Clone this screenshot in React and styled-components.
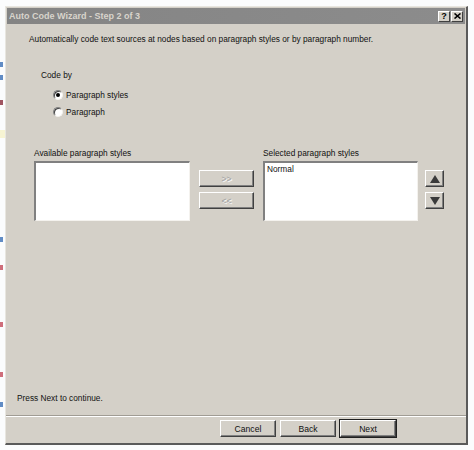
import React, { useState } from 'react';
import styled, { createGlobalStyle } from 'styled-components';

const GlobalStyle = createGlobalStyle`
  html, body {
    margin: 0;
    padding: 0;
    background: #ffffff;
  }
  * {
    box-sizing: border-box;
  }
`;

const App = () => {
  const [codeBy, setCodeBy] = useState('styles');
  return (
    <Desktop>
      <GlobalStyle />
      <BehindStrip>
        <Mark color='#3b6fb6' top={62} />
        <Mark color='#3b6fb6' top={75} />
        <Mark color='#8a2a3a' top={100} />
        <Mark color='#f6f1c8' top={130} wide />
        <Mark color='#3b6fb6' top={237} />
        <Mark color='#c44a5a' top={265} />
        <Mark color='#c44a5a' top={322} />
        <Mark color='#c44a5a' top={372} />
        <Mark color='#3b6fb6' top={402} />
      </BehindStrip>
      <Window>
        <TitleBar>
          <Title>Auto Code Wizard - Step 2 of 3</Title>
          <Caption>
            <CaptionButton>?</CaptionButton>
            <CaptionButton>
              <svg width='7' height='6' viewBox='0 0 7 6'>
                <path d='M0.5 0.5 L6.5 5.5 M6.5 0.5 L0.5 5.5' stroke='#000' strokeWidth='1.6' />
              </svg>
            </CaptionButton>
          </Caption>
        </TitleBar>
        <Body>
          <Intro>Automatically code text sources at nodes based on paragraph styles or by paragraph number.</Intro>
          <Group>
            <GroupLabel>Code by</GroupLabel>
            <Radio onClick={() => setCodeBy('styles')}>
              <RadioDot checked={codeBy === 'styles'} />
              Paragraph styles
            </Radio>
            <Radio onClick={() => setCodeBy('number')}>
              <RadioDot checked={codeBy === 'number'} />
              Paragraph
            </Radio>
          </Group>
          <Lists>
            <ListLabel col={1}>Available paragraph styles</ListLabel>
            <ListLabel col={3}>Selected paragraph styles</ListLabel>
            <ListBox col={1} />
            <MoveButtons>
              <PushButton disabled>&gt;&gt;</PushButton>
              <PushButton disabled>&lt;&lt;</PushButton>
            </MoveButtons>
            <ListBox col={3}>
              <ListItem>Normal</ListItem>
            </ListBox>
            <ArrowButtons>
              <ArrowButton>
                <svg width='10' height='8' viewBox='0 0 10 8'>
                  <path d='M5 0 L10 8 L0 8 Z' fill='#3a3a3a' />
                </svg>
              </ArrowButton>
              <ArrowButton>
                <svg width='10' height='8' viewBox='0 0 10 8'>
                  <path d='M0 0 L10 0 L5 8 Z' fill='#3a3a3a' />
                </svg>
              </ArrowButton>
            </ArrowButtons>
          </Lists>
          <Spacer />
          <Footer>Press Next to continue.</Footer>
        </Body>
        <Separator />
        <ButtonRow>
          <PushButton wide>Cancel</PushButton>
          <PushButton wide>Back</PushButton>
          <PushButton wide isDefault>Next</PushButton>
        </ButtonRow>
      </Window>
    </Desktop>
  );
};

export default App;

const Desktop = styled.div`
  position: relative;
  width: 474px;
  height: 450px;
  overflow: hidden;
  background: #fbfcfd;
  padding: 6px 0 0 5px;
  font-family: 'Liberation Sans', Arial, sans-serif;
  font-size: 8.3px;
  color: #111;
`;

const BehindStrip = styled.div`
  position: absolute;
  left: 0;
  top: 0;
  width: 5px;
  height: 450px;
`;

const Mark = styled.div`
  position: absolute;
  left: 0;
  top: ${(p) => p.top}px;
  width: ${(p) => (p.wide ? 5 : 3)}px;
  height: ${(p) => (p.wide ? 8 : 5)}px;
  background: ${(p) => p.color};
  opacity: 0.8;
`;

const Window = styled.div`
  width: 463px;
  height: 439px;
  background: #d4d0c8;
  border-top: 1px solid #e8e6e0;
  border-left: 1px solid #e8e6e0;
  border-right: 2px solid #5a5a5a;
  border-bottom: 2px solid #5a5a5a;
  display: flex;
  flex-direction: column;
`;

const TitleBar = styled.div`
  height: 16px;
  margin: 1px 1px 0 1px;
  background: linear-gradient(to right, #848484, #8c8c8c);
  display: flex;
  align-items: center;
  justify-content: space-between;
  padding: 0 2px 0 2px;
`;

const Title = styled.div`
  color: #d8d4cc;
  font-family: 'Liberation Sans', Arial, sans-serif;
  font-weight: bold;
  font-size: 9px;
`;

const Caption = styled.div`
  display: flex;
  gap: 1px;
`;

const CaptionButton = styled.div`
  width: 12px;
  height: 11px;
  background: #d4d0c8;
  border-top: 1px solid #fff;
  border-left: 1px solid #fff;
  border-right: 1px solid #404040;
  border-bottom: 1px solid #404040;
  display: flex;
  align-items: center;
  justify-content: center;
  font-weight: bold;
  font-size: 9px;
  line-height: 1;
  color: #000;
`;

const Body = styled.div`
  flex: 1;
  display: flex;
  flex-direction: column;
  padding: 0 0 0 10px;
`;

const Intro = styled.div`
  margin: 10px 0 0 13px;
  line-height: 11px;
`;

const Group = styled.div`
  margin: 25px 0 0 25px;
  display: flex;
  flex-direction: column;
`;

const GroupLabel = styled.div`
  line-height: 11px;
  margin-bottom: 8px;
`;

const Radio = styled.label`
  display: flex;
  align-items: center;
  gap: 3px;
  margin-left: 12px;
  height: 11px;
  margin-bottom: 6px;
  cursor: default;
`;

const RadioDot = styled.span`
  width: 10px;
  height: 10px;
  border-radius: 50%;
  background: #fff;
  border: 1px solid;
  border-color: #808080 #f4f2ee #f4f2ee #808080;
  box-shadow: inset 1px 1px 0 #404040;
  display: flex;
  align-items: center;
  justify-content: center;
  &::after {
    content: '';
    width: 4px;
    height: 4px;
    border-radius: 50%;
    background: ${(p) => (p.checked ? '#000' : 'transparent')};
  }
`;

const Lists = styled.div`
  margin: 25px 0 0 18px;
  display: grid;
  grid-template-columns: 156px 55px 155px 18px;
  grid-template-rows: 12px 60px;
  column-gap: 9px;
  row-gap: 1px;
`;

const ListLabel = styled.div`
  grid-column: ${(p) => p.col};
  grid-row: 1;
  line-height: 11px;
`;

const ListBox = styled.div`
  grid-column: ${(p) => p.col};
  grid-row: 2;
  background: #fff;
  border-top: 2px solid #808080;
  border-left: 2px solid #808080;
  border-right: 1px solid #f4f2ee;
  border-bottom: 1px solid #f4f2ee;
  padding: 1px 2px;
`;

const ListItem = styled.div`
  line-height: 10px;
`;

const MoveButtons = styled.div`
  grid-column: 2;
  grid-row: 2;
  display: flex;
  flex-direction: column;
  gap: 5px;
  padding-top: 9px;
`;

const ArrowButtons = styled.div`
  grid-column: 4;
  grid-row: 2;
  display: flex;
  flex-direction: column;
  gap: 5px;
  padding-top: 9px;
  margin-left: -2px;
`;

const PushButton = styled.div`
  width: ${(p) => (p.wide ? '56px' : '100%')};
  height: 17px;
  background: #d4d0c8;
  border: 1px solid;
  border-color: #fff #404040 #404040 #fff;
  box-shadow: inset -1px -1px 0 #808080;
  display: flex;
  align-items: center;
  justify-content: center;
  color: ${(p) => (p.disabled ? '#a0a0a0' : '#111')};
  text-shadow: ${(p) => (p.disabled ? '1px 1px 0 #fff' : 'none')};
  outline: ${(p) => (p.isDefault ? '1px solid #202020' : 'none')};
  font-size: 8.6px;
`;

const ArrowButton = styled.div`
  width: 19px;
  height: 17px;
  background: #d4d0c8;
  border: 1px solid;
  border-color: #fff #404040 #404040 #fff;
  box-shadow: inset -1px -1px 0 #808080;
  display: flex;
  align-items: center;
  justify-content: center;
`;

const Spacer = styled.div`
  flex: 1;
`;

const Footer = styled.div`
  margin: 0 0 11px 1px;
  line-height: 11px;
`;

const Separator = styled.div`
  border-top: 1px solid #a09c94;
  border-bottom: 1px solid #fff;
`;

const ButtonRow = styled.div`
  display: flex;
  justify-content: flex-end;
  gap: 4px;
  padding: 3px 70px 6px 0;
`;
